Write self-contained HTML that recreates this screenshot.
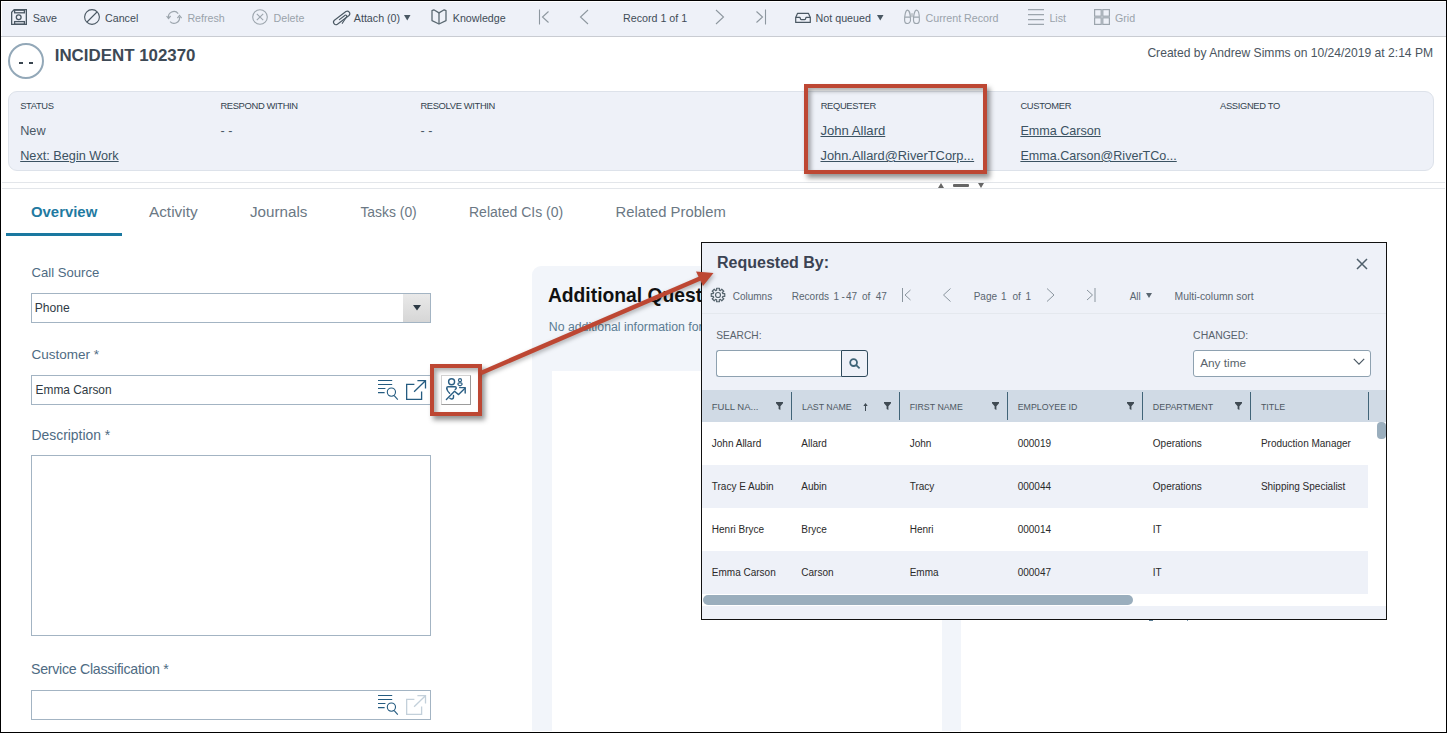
<!DOCTYPE html>
<html><head><meta charset="utf-8"><style>
html,body{margin:0;padding:0}
body{width:1447px;height:733px;position:relative;overflow:hidden;background:#fff;font-family:"Liberation Sans",sans-serif}
.frame{position:absolute;left:0;top:0;width:1445px;height:731px;border:1px solid #000;z-index:100;pointer-events:none}
.t{position:absolute;white-space:pre;line-height:1}
.b{position:absolute}
svg.b{overflow:visible}
</style></head><body>
<div class="b" style="left:2px;top:2px;width:1444px;height:34px;background:#eef1f8"></div>
<div class="b" style="left:1px;top:36px;width:1445px;height:1px;background:#c9ccd2"></div>
<svg class="b" style="left:11px;top:9px" width="16" height="16" viewBox="0 0 16 16"><g fill="none" stroke="#4a5863" stroke-width="1.3"><path d="M3.2 0.65H15.35V15.35H0.65V3.2Z"/><rect x="3.6" y="1.2" width="9.8" height="2.6"/><rect x="3.6" y="12.6" width="9.8" height="2.6"/><circle cx="7.7" cy="8.3" r="2.4"/></g></svg>
<div class="t" id="tx0" style="left:32.70px;top:13px;font-size:10.7px;color:#3f4c57;font-weight:400;">Save</div>
<svg class="b" style="left:84px;top:9px" width="16" height="16" viewBox="0 0 16 16"><g fill="none" stroke="#4a5863" stroke-width="1.1"><circle cx="8" cy="8" r="7.4"/><path d="M3 13L13 3"/></g></svg>
<div class="t" id="tx1" style="left:105.00px;top:13px;font-size:10.7px;color:#3f4c57;font-weight:400;">Cancel</div>
<svg class="b" style="left:166px;top:9px" width="16" height="16" viewBox="0 0 16 16"><g fill="none" stroke="#9ca5ad" stroke-width="1.2"><path d="M2.5 9A5.5 5.5 0 0 1 12.2 4.6"/><path d="M13.5 8A5.5 5.5 0 0 1 4.1 12.6"/><path d="M0.6 7L2.5 9.6L4.6 7"/><path d="M11.4 9.2L13.5 6.5L15.6 9.2"/></g></svg>
<div class="t" id="tx2" style="left:187.40px;top:13px;font-size:10.7px;color:#9aa3ab;font-weight:400;">Refresh</div>
<svg class="b" style="left:252px;top:9px" width="16" height="16" viewBox="0 0 16 16"><g fill="none" stroke="#9ca5ad" stroke-width="1.1"><circle cx="8" cy="8" r="7.3"/><path d="M4.8 4.8L11.2 11.2M11.2 4.8L4.8 11.2"/></g></svg>
<div class="t" id="tx3" style="left:273.50px;top:13px;font-size:10.7px;color:#9aa3ab;font-weight:400;">Delete</div>
<svg class="b" style="left:334px;top:9px" width="16" height="16" viewBox="0 0 16 16"><g fill="none" stroke="#4a5863" stroke-width="1.15" stroke-linecap="round"><path d="M0.4 11.2L11.9 2.5A2.55 2.55 0 0 1 15 6.5L3.4 15.3A2.55 2.55 0 0 1 0.4 11.2Z"/><path d="M5.4 10.6L11.1 6.2A1.15 1.15 0 0 1 12.5 8L8.3 14.3"/></g></svg>
<div class="t" id="tx4" style="left:353.80px;top:13px;font-size:10.7px;color:#3f4c57;font-weight:400;">Attach (0)</div>
<svg class="b" style="left:404px;top:15px" width="7" height="6" viewBox="0 0 7 6"><path d="M0 0H6.5L3.25 5.5Z" fill="#4a5863"/></svg>
<svg class="b" style="left:431px;top:9px" width="16" height="16" viewBox="0 0 16 16"><g fill="none" stroke="#5b6972" stroke-width="1.3" stroke-linejoin="round"><path d="M1 1.6L2.8 0.8L8 3.9L13.2 0.8L15 1.6V11.7L8 15L1 11.7Z"/><path d="M8 3.9V15"/></g></svg>
<div class="t" id="tx5" style="left:452.80px;top:13px;font-size:10.7px;color:#3f4c57;font-weight:400;">Knowledge</div>
<svg class="b" style="left:537px;top:9px" width="14" height="16" viewBox="0 0 14 16"><g fill="none" stroke="#8d979f" stroke-width="1.1"><path d="M2.5 0.5V15.5"/><path d="M11.5 2.5L5.5 8L11.5 13.5"/></g></svg>
<svg class="b" style="left:578px;top:9px" width="12" height="16" viewBox="0 0 12 16"><g fill="none" stroke="#8d979f" stroke-width="1.1"><path d="M10 1L2.5 8L10 15"/></g></svg>
<div class="t" id="tx6" style="left:623.00px;top:13px;font-size:10.7px;color:#3f4c57;font-weight:400;">Record 1 of 1</div>
<svg class="b" style="left:714px;top:9px" width="12" height="16" viewBox="0 0 12 16"><g fill="none" stroke="#8d979f" stroke-width="1.1"><path d="M2 1L9.5 8L2 15"/></g></svg>
<svg class="b" style="left:754px;top:9px" width="14" height="16" viewBox="0 0 14 16"><g fill="none" stroke="#8d979f" stroke-width="1.1"><path d="M2.5 2.5L8.5 8L2.5 13.5"/><path d="M11.5 0.5V15.5"/></g></svg>
<svg class="b" style="left:795px;top:12px" width="16" height="12" viewBox="0 0 16 12"><g fill="none" stroke="#4a5863" stroke-width="1.2" stroke-linejoin="round"><path d="M2.6 1.3H13.4L15.3 5.4V10.4H0.7V5.4Z"/><path d="M0.7 5.4H5L5.6 7.2Q5.8 7.6 6.3 7.6H9.7Q10.2 7.6 10.4 7.2L11 5.4H15.3"/></g></svg>
<div class="t" id="tx7" style="left:815.60px;top:13px;font-size:10.7px;color:#3f4c57;font-weight:400;">Not queued</div>
<svg class="b" style="left:877px;top:15px" width="7" height="6" viewBox="0 0 7 6"><path d="M0 0H6.5L3.25 5.5Z" fill="#4a5863"/></svg>
<svg class="b" style="left:904px;top:9px" width="16" height="16" viewBox="0 0 16 16"><rect x="6.8" y="4.2" width="2.4" height="4" fill="#c3c9cf"/><g fill="none" stroke="#9ca5ad" stroke-width="1.15"><path d="M0.6 10.9C0.6 7 1.4 1.1 3.5 1.1C5.6 1.1 6.5 7 6.5 10.9A2.95 3.6 0 0 1 0.6 10.9Z"/><path d="M9.5 10.9C9.5 7 10.4 1.1 12.5 1.1C14.6 1.1 15.4 7 15.4 10.9A2.95 3.6 0 0 1 9.5 10.9Z"/><path d="M1 8.1H6.1M9.9 8.1H15"/></g></svg>
<div class="t" id="tx8" style="left:925.50px;top:13px;font-size:10.7px;color:#9aa3ab;font-weight:400;">Current Record</div>
<svg class="b" style="left:1028px;top:9px" width="16" height="16" viewBox="0 0 16 16"><g stroke="#9ca5ad" stroke-width="1.2"><path d="M0 0.6H16M0 5.6H16M0 10.6H16M0 15.4H16"/></g></svg>
<div class="t" id="tx9" style="left:1049.40px;top:13px;font-size:10.7px;color:#9aa3ab;font-weight:400;">List</div>
<svg class="b" style="left:1094px;top:9px" width="16" height="16" viewBox="0 0 16 16"><g fill="none" stroke="#9ca5ad" stroke-width="1.2"><rect x="0.6" y="0.6" width="6.6" height="6.6"/><rect x="8.8" y="0.6" width="6.6" height="6.6"/><rect x="0.6" y="8.8" width="6.6" height="6.6"/><rect x="8.8" y="8.8" width="6.6" height="6.6"/></g></svg>
<div class="t" id="tx10" style="left:1115.00px;top:13px;font-size:10.7px;color:#9aa3ab;font-weight:400;">Grid</div>
<div class="b" style="left:8px;top:43px;width:32px;height:32px;border:2px solid #93a8b8;border-radius:50%"></div>
<div class="b" style="left:19px;top:62px;width:4px;height:2px;background:#3a4650"></div>
<div class="b" style="left:29px;top:62px;width:4px;height:2px;background:#3a4650"></div>
<div class="t" id="tx11" style="left:54.70px;top:48px;font-size:16.9px;color:#3d4955;font-weight:700;">INCIDENT 102370</div>
<div class="t" id="tx12" style="left:1147.40px;top:47px;font-size:12.1px;color:#4a5560;font-weight:400;">Created by Andrew Simms on 10/24/2019 at 2:14 PM</div>
<div class="b" style="left:8px;top:91px;width:1424px;height:78px;background:#eef1f8;border:1px solid #dde2ea;border-radius:9px"></div>
<div class="t" id="tx13" style="left:20.20px;top:101px;font-size:9.4px;color:#33434f;font-weight:400;letter-spacing:-0.35px">STATUS</div>
<div class="t" id="tx14" style="left:220.40px;top:101px;font-size:9.4px;color:#33434f;font-weight:400;letter-spacing:-0.35px">RESPOND WITHIN</div>
<div class="t" id="tx15" style="left:420.40px;top:101px;font-size:9.4px;color:#33434f;font-weight:400;letter-spacing:-0.35px">RESOLVE WITHIN</div>
<div class="t" id="tx16" style="left:820.70px;top:101px;font-size:9.4px;color:#33434f;font-weight:400;letter-spacing:-0.35px">REQUESTER</div>
<div class="t" id="tx17" style="left:1020.40px;top:101px;font-size:9.4px;color:#33434f;font-weight:400;letter-spacing:-0.35px">CUSTOMER</div>
<div class="t" id="tx18" style="left:1220.00px;top:101px;font-size:9.4px;color:#33434f;font-weight:400;letter-spacing:-0.35px">ASSIGNED TO</div>
<div class="t" id="tx19" style="left:20.20px;top:125px;font-size:12.7px;color:#4a5866;font-weight:400;">New</div>
<div class="t" id="tx20" style="left:20.20px;top:150px;font-size:12.7px;color:#3b5262;font-weight:400;text-decoration:underline;text-underline-offset:0.5px">Next: Begin Work</div>
<div class="t" id="tx21" style="left:220.40px;top:125px;font-size:12.7px;color:#4a5866;font-weight:400;">- -</div>
<div class="t" id="tx22" style="left:420.40px;top:125px;font-size:12.7px;color:#4a5866;font-weight:400;">- -</div>
<div class="t" id="tx23" style="left:820.50px;top:124px;font-size:13.1px;color:#3b5262;font-weight:400;text-decoration:underline;text-underline-offset:0.5px">John Allard</div>
<div class="t" id="tx24" style="left:820.50px;top:150px;font-size:12.85px;color:#3b5262;font-weight:400;text-decoration:underline;text-underline-offset:0.5px">John.Allard@RiverTCorp...</div>
<div class="t" id="tx25" style="left:1020.40px;top:125px;font-size:12.6px;color:#3b5262;font-weight:400;text-decoration:underline;text-underline-offset:0.5px">Emma Carson</div>
<div class="t" id="tx26" style="left:1020.40px;top:150px;font-size:12.55px;color:#3b5262;font-weight:400;text-decoration:underline;text-underline-offset:0.5px">Emma.Carson@RiverTCo...</div>
<div class="b" style="left:2px;top:182px;width:1443px;height:1px;background:#e3e6ea"></div>
<div class="b" style="left:2px;top:188px;width:1443px;height:1px;background:#e3e6ea"></div>
<svg class="b" style="left:938px;top:183px" width="6" height="5" viewBox="0 0 6 5"><path d="M0 5H6L3 0Z" fill="#666"/></svg>
<div class="b" style="left:953px;top:184px;width:16px;height:3px;background:#666;border-radius:1px"></div>
<svg class="b" style="left:978px;top:183px" width="6" height="5" viewBox="0 0 6 5"><path d="M0 0H6L3 5Z" fill="#666"/></svg>
<div class="t" id="tx27" style="left:31.00px;top:205px;font-size:14.9px;color:#1f7aa1;font-weight:700;">Overview</div>
<div class="b" style="left:6px;top:233px;width:116px;height:3px;background:#1a78a0"></div>
<div class="t" id="tx28" style="left:148.90px;top:204px;font-size:15.4px;color:#6b7884;font-weight:400;">Activity</div>
<div class="t" id="tx29" style="left:250.00px;top:204px;font-size:15.2px;color:#6b7884;font-weight:400;">Journals</div>
<div class="t" id="tx30" style="left:360.40px;top:206px;font-size:13.9px;color:#6b7884;font-weight:400;">Tasks (0)</div>
<div class="t" id="tx31" style="left:469.00px;top:205px;font-size:14.0px;color:#6b7884;font-weight:400;">Related CIs (0)</div>
<div class="t" id="tx32" style="left:615.50px;top:205px;font-size:14.8px;color:#6b7884;font-weight:400;">Related Problem</div>
<div class="t" id="tx33" style="left:31.60px;top:266px;font-size:13.1px;color:#4e6b83;font-weight:400;">Call Source</div>
<div class="b" style="left:31px;top:293px;width:398px;height:28px;border:1px solid #a3b4c3;background:#fff"></div>
<div class="b" style="left:403px;top:294px;width:27px;height:28px;background:linear-gradient(#e9e9e9,#d6d6d6)"></div>
<svg class="b" style="left:413px;top:305px" width="8" height="6" viewBox="0 0 8 6"><path d="M0 0H8L4 5.5Z" fill="#2d3a45"/></svg>
<div class="t" id="tx34" style="left:34.70px;top:302px;font-size:12.1px;color:#2f3a44;font-weight:400;">Phone</div>
<div class="t" id="tx35" style="left:31.50px;top:348px;font-size:13.5px;color:#4e6b83;font-weight:400;">Customer *</div>
<div class="b" style="left:31px;top:375px;width:398px;height:28px;border:1px solid #a3b4c3;background:#fff"></div>
<div class="t" id="tx36" style="left:35.60px;top:385px;font-size:11.9px;color:#2f3a44;font-weight:400;">Emma Carson</div>
<svg class="b" style="left:378px;top:380px" width="21" height="21" viewBox="0 0 21 21"><g fill="none" stroke="#245b80" stroke-width="1.1"><path d="M0 0.55H14.2M0 4.5H14.2M0 8.45H7.4M0 12.6H6.6"/><circle cx="13.4" cy="12.1" r="4.1"/><path d="M16.2 15.6L19.8 19.7"/></g></svg>
<svg class="b" style="left:406px;top:380px" width="21" height="21" viewBox="0 0 21 21"><g fill="none" stroke="#245b80" stroke-width="1.3"><path d="M8.4 4.4H0.65V19.35H15.6V11.5"/><path d="M8.1 11.7L19.4 0.7M11.4 0.65H19.5V8.4"/></g></svg>
<div class="t" id="tx37" style="left:31.50px;top:429px;font-size:13.9px;color:#4e6b83;font-weight:400;">Description *</div>
<div class="b" style="left:31px;top:455px;width:398px;height:179px;border:1px solid #a3b4c3;background:#fff"></div>
<div class="t" id="tx38" style="left:31.00px;top:662px;font-size:14.2px;color:#4e6b83;font-weight:400;letter-spacing:-0.28px">Service Classification *</div>
<div class="b" style="left:31px;top:690px;width:398px;height:28px;border:1px solid #a3b4c3;background:#fff"></div>
<svg class="b" style="left:378px;top:695px" width="21" height="21" viewBox="0 0 21 21"><g fill="none" stroke="#245b80" stroke-width="1.1"><path d="M0 0.55H14.2M0 4.5H14.2M0 8.45H7.4M0 12.6H6.6"/><circle cx="13.4" cy="12.1" r="4.1"/><path d="M16.2 15.6L19.8 19.7"/></g></svg>
<svg class="b" style="left:406px;top:695px" width="21" height="21" viewBox="0 0 21 21"><g fill="none" stroke="#c3d0da" stroke-width="1.3"><path d="M8.4 4.4H0.65V19.35H15.6V11.5"/><path d="M8.1 11.7L19.4 0.7M11.4 0.65H19.5V8.4"/></g></svg>
<div class="b" style="left:441px;top:375px;width:28px;height:28px;border:1px solid #d2d2d2;border-right-color:#9c9c9c;border-bottom-color:#9c9c9c;background:#fff"></div>
<svg class="b" style="left:440px;top:374px" width="32" height="32" viewBox="0 0 32 32"><g fill="none" stroke="#2b5f84" stroke-width="1.4" stroke-linecap="round" stroke-linejoin="round"><circle cx="11.6" cy="7.8" r="3"/><path d="M6.8 14.8V13.8Q6.8 12.8 8 12.8H15.2Q16.2 12.8 16.2 13.8V14.6L15.2 15.6"/><path d="M6.8 14.6Q7.2 17.2 9.6 19.2"/><path d="M13.5 21.4V23Q13.5 25 11.6 25Q10.4 25 9.8 24.2"/><circle cx="20" cy="6.2" r="1.5" stroke-width="1.2"/><path d="M18 10.6V9.8Q18 8.9 19 8.9H21Q22 8.9 22 9.8V10.6L20.8 11.6H19.2Z" stroke-width="1.2"/><path d="M6.4 25.4L14.5 17.3L18.6 20.6L25 14.2"/><path d="M19.6 13.6H25.2V19"/></g></svg>
<div class="b" style="left:532px;top:266px;width:429px;height:465px;background:#f2f5fa;border-radius:9px 9px 0 0"></div>
<div class="b" style="left:552px;top:371px;width:390px;height:360px;background:#fff"></div>
<div class="t" id="tx39" style="left:547.90px;top:286px;font-size:19.3px;color:#111;font-weight:700;">Additional Questions</div>
<div class="t" id="tx40" style="left:548.80px;top:321px;font-size:12.3px;color:#5b7c93;font-weight:400;">No additional information for this service</div>
<div class="b" style="left:804px;top:84px;width:175px;height:82px;border:4px solid #bd4733;box-shadow:3px 4px 5px rgba(0,0,0,0.42), inset 3px 3px 4px rgba(0,0,0,0.32)"></div>
<div class="b" style="left:430px;top:364px;width:44px;height:44px;border:4px solid #bd4733;box-shadow:3px 4px 5px rgba(0,0,0,0.42), inset 3px 3px 4px rgba(0,0,0,0.32)"></div>
<div class="b" id="dlg" style="left:701px;top:242px;width:684px;height:376px;border:1px solid #111;background:#eef1f8;overflow:hidden">
<div class="t" id="tx41" style="left:15.00px;top:12px;font-size:16px;color:#3b4353;font-weight:700;">Requested By:</div>
<svg class="b" style="left:654px;top:15px" width="12" height="12" viewBox="0 0 12 12"><g stroke="#4f5f6b" stroke-width="1.5"><path d="M1 1L11 11M11 1L1 11"/></g></svg>
<svg class="b" style="left:8px;top:44px" width="16" height="16" viewBox="0 0 16 16"><g fill="none" stroke="#56646e" stroke-width="1.2" stroke-linejoin="round"><circle cx="8" cy="8" r="2.5"/><path d="M6.71 3.17L6.57 1.25L9.43 1.25L9.29 3.17L10.50 3.67L11.76 2.21L13.79 4.24L12.33 5.50L12.83 6.71L14.75 6.57L14.75 9.43L12.83 9.29L12.33 10.50L13.79 11.76L11.76 13.79L10.50 12.33L9.29 12.83L9.43 14.75L6.57 14.75L6.71 12.83L5.50 12.33L4.24 13.79L2.21 11.76L3.67 10.50L3.17 9.29L1.25 9.43L1.25 6.57L3.17 6.71L3.67 5.50L2.21 4.24L4.24 2.21L5.50 3.67Z"/></g></svg>
<div class="t" id="tx42" style="left:30.70px;top:49px;font-size:10px;color:#5a6670;font-weight:400;">Columns</div>
<div class="t" id="tx43" style="left:89.80px;top:49px;font-size:10px;color:#5a6670;font-weight:400;">Records</div>
<div class="t" id="tx44" style="left:131.60px;top:49px;font-size:10px;color:#5a6670;font-weight:400;">1</div>
<div class="t" id="tx45" style="left:139.50px;top:49px;font-size:10px;color:#5a6670;font-weight:400;">-</div>
<div class="t" id="tx46" style="left:144.00px;top:49px;font-size:10px;color:#5a6670;font-weight:400;">47</div>
<div class="t" id="tx47" style="left:160.00px;top:49px;font-size:10px;color:#5a6670;font-weight:400;">of</div>
<div class="t" id="tx48" style="left:173.70px;top:49px;font-size:10px;color:#5a6670;font-weight:400;">47</div>
<svg class="b" style="left:199px;top:45px" width="12" height="14" viewBox="0 0 12 14"><g fill="none" stroke="#8a959e" stroke-width="1"><path d="M1.5 0V14"/><path d="M9.5 2L4 7L9.5 12"/></g></svg>
<svg class="b" style="left:240px;top:45px" width="10" height="14" viewBox="0 0 10 14"><g fill="none" stroke="#8a959e" stroke-width="1"><path d="M8.5 0.5L1.5 7L8.5 13.5"/></g></svg>
<div class="t" id="tx49" style="left:271.70px;top:49px;font-size:10px;color:#5a6670;font-weight:400;">Page</div>
<div class="t" id="tx50" style="left:299.00px;top:49px;font-size:10px;color:#5a6670;font-weight:400;">1</div>
<div class="t" id="tx51" style="left:310.50px;top:49px;font-size:10px;color:#5a6670;font-weight:400;">of</div>
<div class="t" id="tx52" style="left:323.50px;top:49px;font-size:10px;color:#5a6670;font-weight:400;">1</div>
<svg class="b" style="left:344px;top:45px" width="10" height="14" viewBox="0 0 10 14"><g fill="none" stroke="#8a959e" stroke-width="1"><path d="M1 0.5L8 7L1 13.5"/></g></svg>
<svg class="b" style="left:383px;top:45px" width="12" height="14" viewBox="0 0 12 14"><g fill="none" stroke="#8a959e" stroke-width="1"><path d="M2 2L7.5 7L2 12"/><path d="M10 0V14"/></g></svg>
<div class="t" id="tx53" style="left:427.70px;top:49px;font-size:10px;color:#5a6670;font-weight:400;">All</div>
<svg class="b" style="left:444px;top:50px" width="6" height="5" viewBox="0 0 6 5"><path d="M0 0H6L3 5Z" fill="#5a6670"/></svg>
<div class="t" id="tx54" style="left:472.50px;top:49px;font-size:10.4px;color:#5a6670;font-weight:400;">Multi-column sort</div>
<div class="b" style="left:0px;top:70px;width:684px;height:1px;background:#e4e8ee"></div>
<div class="t" id="tx55" style="left:14.20px;top:88px;font-size:10.2px;color:#59636c;font-weight:400;">SEARCH:</div>
<div class="t" id="tx56" style="left:491.10px;top:88px;font-size:10.45px;color:#59636c;font-weight:400;">CHANGED:</div>
<div class="b" style="left:14px;top:107px;width:124px;height:25px;border:1px solid #8ea1b0;border-right:none;border-radius:3px 0 0 3px;background:#fff"></div>
<div class="b" style="left:139px;top:107px;width:25px;height:25px;border:1px solid #2f4a5c;border-radius:0 3px 3px 0;background:#eef1f8"></div>
<svg class="b" style="left:147px;top:115px" width="12" height="11" viewBox="0 0 12 11"><g fill="none" stroke="#3e6478" stroke-width="1.8"><circle cx="4.6" cy="4.6" r="3.4"/><path d="M7.2 7.2L10.6 10.4"/></g></svg>
<div class="b" style="left:491px;top:107px;width:176px;height:25px;border:1px solid #8ea1b0;border-radius:3px;background:#fff"></div>
<div class="t" id="tx57" style="left:498.20px;top:115px;font-size:11.8px;color:#59636c;font-weight:400;">Any time</div>
<svg class="b" style="left:651px;top:115px" width="12" height="8" viewBox="0 0 12 8"><g fill="none" stroke="#4a5863" stroke-width="1.2"><path d="M0.8 0.8L6 6.2L11.2 0.8"/></g></svg>
<div class="b" style="left:0px;top:147px;width:684px;height:32px;background:#d0dae5"></div>
<div class="t" id="tx58" style="left:9.80px;top:159px;font-size:9.5px;color:#4d5862;font-weight:400;">FULL NA...</div>
<div class="t" id="tx59" style="left:100.00px;top:160px;font-size:8.8px;color:#4d5862;font-weight:400;">LAST NAME</div>
<div class="t" id="tx60" style="left:207.70px;top:160px;font-size:8.8px;color:#4d5862;font-weight:400;">FIRST NAME</div>
<div class="t" id="tx61" style="left:315.70px;top:160px;font-size:8.8px;color:#4d5862;font-weight:400;">EMPLOYEE ID</div>
<div class="t" id="tx62" style="left:450.80px;top:160px;font-size:8.9px;color:#4d5862;font-weight:400;">DEPARTMENT</div>
<div class="t" id="tx63" style="left:558.90px;top:160px;font-size:8.9px;color:#4d5862;font-weight:400;">TITLE</div>
<svg class="b" style="left:74px;top:159px" width="7" height="8" viewBox="0 0 7 8"><path d="M0 0H7V1.3L4.4 4.2V8L2.6 7V4.2L0 1.3Z" fill="#3f4a53"/></svg>
<svg class="b" style="left:182px;top:159px" width="7" height="8" viewBox="0 0 7 8"><path d="M0 0H7V1.3L4.4 4.2V8L2.6 7V4.2L0 1.3Z" fill="#3f4a53"/></svg>
<svg class="b" style="left:290px;top:159px" width="7" height="8" viewBox="0 0 7 8"><path d="M0 0H7V1.3L4.4 4.2V8L2.6 7V4.2L0 1.3Z" fill="#3f4a53"/></svg>
<svg class="b" style="left:424.5px;top:159px" width="7" height="8" viewBox="0 0 7 8"><path d="M0 0H7V1.3L4.4 4.2V8L2.6 7V4.2L0 1.3Z" fill="#3f4a53"/></svg>
<svg class="b" style="left:533px;top:159px" width="7" height="8" viewBox="0 0 7 8"><path d="M0 0H7V1.3L4.4 4.2V8L2.6 7V4.2L0 1.3Z" fill="#3f4a53"/></svg>
<svg class="b" style="left:161px;top:160px" width="5" height="8" viewBox="0 0 5 8"><g stroke="#3f4a53" stroke-width="1"><path d="M2.5 1.5V8"/></g><path d="M0.3 3L2.5 0L4.7 3Z" fill="#3f4a53"/></svg>
<div class="b" style="left:89px;top:149px;width:1px;height:28px;background:#416478"></div>
<div class="b" style="left:197px;top:149px;width:1px;height:28px;background:#416478"></div>
<div class="b" style="left:305px;top:149px;width:1px;height:28px;background:#416478"></div>
<div class="b" style="left:440px;top:149px;width:1px;height:28px;background:#416478"></div>
<div class="b" style="left:548px;top:149px;width:1px;height:28px;background:#416478"></div>
<div class="b" style="left:666px;top:149px;width:1px;height:28px;background:#416478"></div>
<div class="b" style="left:0px;top:179px;width:666px;height:185px;background:#fff"></div>
<div class="b" style="left:666px;top:179px;width:18px;height:185px;background:#fff"></div>
<div class="t" id="tx64" style="left:9.80px;top:196px;font-size:10px;color:#2a2a2a;font-weight:400;">John Allard</div>
<div class="t" id="tx65" style="left:99.30px;top:196px;font-size:10px;color:#2a2a2a;font-weight:400;">Allard</div>
<div class="t" id="tx66" style="left:207.70px;top:196px;font-size:10px;color:#2a2a2a;font-weight:400;">John</div>
<div class="t" id="tx67" style="left:315.70px;top:196px;font-size:10px;color:#2a2a2a;font-weight:400;">000019</div>
<div class="t" id="tx68" style="left:450.80px;top:196px;font-size:10px;color:#2a2a2a;font-weight:400;">Operations</div>
<div class="t" id="tx69" style="left:558.90px;top:196px;font-size:10px;color:#2a2a2a;font-weight:400;">Production Manager</div>
<div class="b" style="left:0px;top:222px;width:666px;height:43px;background:#eef1f8"></div>
<div class="t" id="tx70" style="left:9.80px;top:239px;font-size:10px;color:#2a2a2a;font-weight:400;">Tracy E Aubin</div>
<div class="t" id="tx71" style="left:99.30px;top:239px;font-size:10px;color:#2a2a2a;font-weight:400;">Aubin</div>
<div class="t" id="tx72" style="left:207.70px;top:239px;font-size:10px;color:#2a2a2a;font-weight:400;">Tracy</div>
<div class="t" id="tx73" style="left:315.70px;top:239px;font-size:10px;color:#2a2a2a;font-weight:400;">000044</div>
<div class="t" id="tx74" style="left:450.80px;top:239px;font-size:10px;color:#2a2a2a;font-weight:400;">Operations</div>
<div class="t" id="tx75" style="left:558.90px;top:239px;font-size:10px;color:#2a2a2a;font-weight:400;">Shipping Specialist</div>
<div class="t" id="tx76" style="left:9.80px;top:282px;font-size:10px;color:#2a2a2a;font-weight:400;">Henri Bryce</div>
<div class="t" id="tx77" style="left:99.30px;top:282px;font-size:10px;color:#2a2a2a;font-weight:400;">Bryce</div>
<div class="t" id="tx78" style="left:207.70px;top:282px;font-size:10px;color:#2a2a2a;font-weight:400;">Henri</div>
<div class="t" id="tx79" style="left:315.70px;top:282px;font-size:10px;color:#2a2a2a;font-weight:400;">000014</div>
<div class="t" id="tx80" style="left:450.80px;top:282px;font-size:10px;color:#2a2a2a;font-weight:400;">IT</div>
<div class="b" style="left:0px;top:308px;width:666px;height:43px;background:#eef1f8"></div>
<div class="t" id="tx81" style="left:9.80px;top:325px;font-size:10px;color:#2a2a2a;font-weight:400;">Emma Carson</div>
<div class="t" id="tx82" style="left:99.30px;top:325px;font-size:10px;color:#2a2a2a;font-weight:400;">Carson</div>
<div class="t" id="tx83" style="left:207.70px;top:325px;font-size:10px;color:#2a2a2a;font-weight:400;">Emma</div>
<div class="t" id="tx84" style="left:315.70px;top:325px;font-size:10px;color:#2a2a2a;font-weight:400;">000047</div>
<div class="t" id="tx85" style="left:450.80px;top:325px;font-size:10px;color:#2a2a2a;font-weight:400;">IT</div>
<div class="b" style="left:675px;top:179px;width:9px;height:17px;background:#9aaebd;border-radius:4px"></div>
<div class="b" style="left:1px;top:352px;width:430px;height:10px;background:#9aaebd;border-radius:5px"></div>
<div class="b" style="left:0px;top:363px;width:684px;height:13px;background:#eef1f8"></div>
</div>
<div class="b" style="left:1149px;top:620px;width:4px;height:1px;background:#5a7d95"></div>
<div class="b" style="left:1187px;top:620px;width:1px;height:1px;background:#7a9ab0"></div>
<svg class="b" style="left:0;top:0;filter:drop-shadow(1px 2px 2px rgba(0,0,0,0.3))" width="1447" height="733"><path d="M481 373L700 278.5" stroke="#bd4733" stroke-width="4.5"/><path d="M713.5 273L696 271.5L703 286Z" fill="#bd4733"/></svg>
<div class="frame"></div>
</body></html>
